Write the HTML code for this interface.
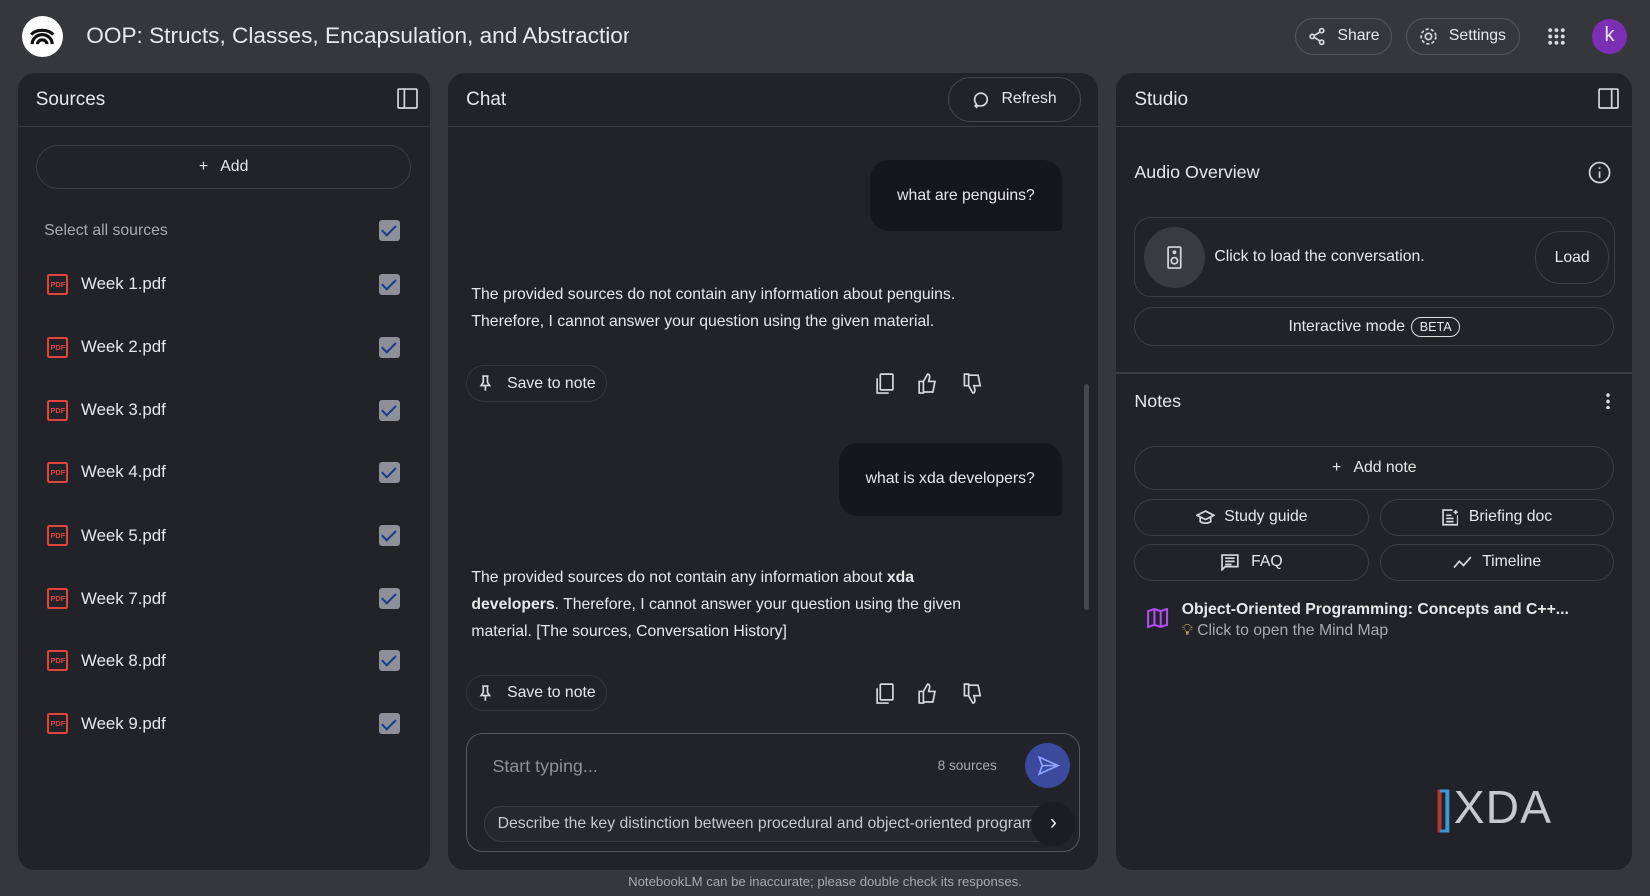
<!DOCTYPE html>
<html><head><meta charset="utf-8"><style>
*{box-sizing:border-box;margin:0;padding:0}
html,body{width:1650px;height:896px;overflow:hidden;background:#36373b}
#w{width:1568px;height:851px;zoom:1.0523;position:relative;font-family:"Liberation Sans",Arial,sans-serif;color:#e8e8ea;background:#36373b}
.a{position:absolute}
.panel{position:absolute;top:69px;height:758px;background:#212328;border-radius:16px;overflow:hidden}
.ph{height:52px;border-bottom:1px solid #3a3c42;font-size:18px;padding:16px 17px;position:relative}
.pill{position:absolute;border:1px solid #3c3e44;border-radius:24px;display:flex;align-items:center;justify-content:center;font-size:15px;font-weight:bold;color:#e8e8ea}
.cb{position:absolute;left:343px;width:20px;height:20px;background:#8d9098;border-radius:3px}
.cb:after{content:"";position:absolute;left:6px;top:2px;width:6px;height:11px;border:solid #1a3a8a;border-width:0 2px 2px 0;transform:rotate(45deg)}
.src{position:absolute;left:28px;font-size:16px;display:flex;align-items:center}
.pdf{width:20px;height:20px;border:2px solid #e0443a;border-radius:2px;color:#e0443a;font-size:7px;font-weight:bold;display:flex;align-items:center;justify-content:center;margin-right:12px}
.bub{position:absolute;background:#16171b;border-radius:18px 18px 4px 18px;font-size:15px;display:flex;align-items:center;justify-content:center}
.ans{position:absolute;left:22px;font-size:15px;line-height:25.5px;width:500px}
svg{stroke:#d8d8dc;fill:none;stroke-width:1.6}
</style></head><body><div id="w">
<div class="a" style="left:21px;top:15px;width:39px;height:39px;border-radius:50%;background:#fff"></div>
<svg class="a" style="left:27px;top:21px;stroke:#111;stroke-width:3" width="27" height="27" viewBox="0 0 27 27"><path d="M4 21a9.5 9 0 0 1 19 0"/><path d="M9 21a4.5 4 0 0 1 9 0"/><path d="M3 12a12 8 0 0 1 21 0"/></svg>
<div class="a" style="left:82px;top:22px;font-size:21.5px;color:#e8e8ea;width:516px;overflow:hidden;white-space:nowrap">OOP: Structs, Classes, Encapsulation, and Abstraction</div>
<div class="pill" style="left:1231px;top:17px;width:92px;height:35px;border-color:#55575d;font-weight:normal"><svg width="18" height="18" viewBox="0 0 18 18" style="margin-right:10px"><circle cx="13" cy="3.5" r="2"/><circle cx="4" cy="9" r="2"/><circle cx="13" cy="14.5" r="2"/><path d="M6 8l5-3M6 10l5 3"/></svg>Share</div>
<div class="pill" style="left:1336px;top:17px;width:108px;height:35px;border-color:#55575d;font-weight:normal"><svg width="18" height="18" viewBox="0 0 18 18" style="margin-right:10px"><circle cx="9" cy="9" r="3"/><circle cx="9" cy="9" r="7" stroke-dasharray="3 2"/></svg>Settings</div>
<div class="a" style="left:1470px;top:26px;width:18px;height:18px;background:radial-gradient(circle,#ddd 1.7px,transparent 2px) 0 0/6px 6px"></div>
<div class="a" style="left:1513px;top:18px;width:33px;height:33px;border-radius:50%;background:#7b2fb5;font-size:19px;text-align:center;line-height:31px">k</div>

<div class="panel" style="left:17px;width:392px">
<div class="ph">Sources<svg class="a" style="left:360px;top:15px" width="20" height="20" viewBox="0 0 20 20"><rect x="1" y="1" width="18" height="18" rx="1"/><path d="M7 1v18"/></svg></div>
<div class="pill" style="left:17px;top:69px;width:357px;height:42px;font-weight:normal">+&nbsp;&nbsp; Add</div>
<div class="a" style="left:25px;top:142px;font-size:15px;color:#a8aab0">Select all sources</div>
<div class="cb" style="top:140px"></div>
<div class="src" style="top:191px"><div class="pdf">PDF</div>Week 1.pdf</div><div class="cb" style="top:191px"></div>
<div class="src" style="top:251px"><div class="pdf">PDF</div>Week 2.pdf</div><div class="cb" style="top:251px"></div>
<div class="src" style="top:311px"><div class="pdf">PDF</div>Week 3.pdf</div><div class="cb" style="top:311px"></div>
<div class="src" style="top:370px"><div class="pdf">PDF</div>Week 4.pdf</div><div class="cb" style="top:370px"></div>
<div class="src" style="top:430px"><div class="pdf">PDF</div>Week 5.pdf</div><div class="cb" style="top:430px"></div>
<div class="src" style="top:490px"><div class="pdf">PDF</div>Week 7.pdf</div><div class="cb" style="top:490px"></div>
<div class="src" style="top:549px"><div class="pdf">PDF</div>Week 8.pdf</div><div class="cb" style="top:549px"></div>
<div class="src" style="top:609px"><div class="pdf">PDF</div>Week 9.pdf</div><div class="cb" style="top:609px"></div>
</div>

<div class="panel" style="left:426px;width:617px">
<div class="ph">Chat</div>
<div class="pill" style="left:475px;top:4px;width:126px;height:43px;border-color:#44464c;font-weight:normal"><svg width="18" height="18" viewBox="0 0 18 18" style="margin-right:10px"><path d="M4 13a6 6 0 1 1 5 2H3"/><path d="M5 17l-2-2 2-2"/></svg>Refresh</div>
<div class="bub" style="left:401px;top:83px;width:182px;height:68px">what are penguins?</div>
<div class="ans" style="top:199px">The provided sources do not contain any information about penguins. Therefore, I cannot answer your question using the given material.</div>
<div class="pill" style="left:17px;top:278px;width:134px;height:35px;border-color:#34363c;font-weight:normal"><svg width="14" height="16" viewBox="0 0 14 16" style="margin-right:14px"><path d="M4 1h6M5 1v6l-2 3h8l-2-3V1M7 10v5"/></svg>Save to note</div>
<svg class="a" style="left:406px;top:285px" width="120" height="22" viewBox="0 0 120 22"><rect x="5" y="2" width="12" height="15" rx="1"/><path d="M2 6v14h11"/><path d="M46 9h-4v11h4zM46 9l4-7c2 0 2 2 2 3l-1 4h6l-2 10H46"/><path d="M89 13h-4V2h4zM89 13l4 7c2 0 2-2 2-3l-1-4h6l-2-10H89"/></svg>
<div class="bub" style="left:371px;top:352px;width:212px;height:69px">what is xda developers?</div>
<div class="ans" style="top:468px;width:490px">The provided sources do not contain any information about <b>xda developers</b>. Therefore, I cannot answer your question using the given material. [The sources, Conversation History]</div>
<div class="pill" style="left:17px;top:572px;width:134px;height:35px;border-color:#34363c;font-weight:normal"><svg width="14" height="16" viewBox="0 0 14 16" style="margin-right:14px"><path d="M4 1h6M5 1v6l-2 3h8l-2-3V1M7 10v5"/></svg>Save to note</div>
<svg class="a" style="left:406px;top:579px" width="120" height="22" viewBox="0 0 120 22"><rect x="5" y="2" width="12" height="15" rx="1"/><path d="M2 6v14h11"/><path d="M46 9h-4v11h4zM46 9l4-7c2 0 2 2 2 3l-1 4h6l-2 10H46"/><path d="M89 13h-4V2h4zM89 13l4 7c2 0 2-2 2-3l-1-4h6l-2-10H89"/></svg>
<div class="a" style="left:604px;top:296px;width:5px;height:215px;background:#45474d;border-radius:3px"></div>
<div class="a" style="left:17px;top:628px;width:583px;height:113px;border:1px solid #55575d;border-radius:16px"></div>
<div class="a" style="left:42px;top:649px;font-size:17px;color:#8f9197">Start typing...</div>
<div class="a" style="left:465px;top:651px;font-size:13px;color:#a8aab0">8 sources</div>
<div class="a" style="left:548px;top:637px;width:43px;height:43px;border-radius:50%;background:#3b4a9c"></div>
<svg class="a" style="left:559px;top:648px;stroke:#8ea3ff" width="22" height="22" viewBox="0 0 22 22"><path d="M2 3l18 8-18 8 3-8zM5 11h15"/></svg>
<div class="a" style="left:34px;top:697px;width:560px;height:34px;border:1px solid #3c3e44;border-radius:17px;background:#26282d;font-size:15px;padding:8px 12px;white-space:nowrap;overflow:hidden;color:#c8c9cd">Describe the key distinction between procedural and object-oriented programming</div>
<div class="a" style="left:554px;top:693px;width:42px;height:42px;border-radius:50%;background:#1c1d21;font-size:20px;text-align:center;line-height:40px;color:#eee">›</div>
</div>

<div class="panel" style="left:1061px;width:490px">
<div class="ph">Studio<svg class="a" style="left:458px;top:15px" width="20" height="20" viewBox="0 0 20 20"><rect x="1" y="1" width="18" height="18" rx="1"/><path d="M13 1v18"/></svg></div>
<div class="a" style="left:17px;top:85px;font-size:17px">Audio Overview</div>
<svg class="a" style="left:448px;top:84px" width="22" height="22" viewBox="0 0 22 22"><circle cx="11" cy="11" r="9.5"/><path d="M11 10v6M11 6v1.5"/></svg>
<div class="a" style="left:17px;top:137px;width:457px;height:76px;border:1px solid #3c3e44;border-radius:16px"></div>
<div class="a" style="left:26px;top:147px;width:58px;height:58px;border-radius:50%;background:#3a3b40"></div>
<svg class="a" style="left:47px;top:165px" width="16" height="22" viewBox="0 0 16 22"><rect x="2" y="1" width="12" height="20" rx="1"/><circle cx="8" cy="14" r="3"/><circle cx="8" cy="6" r="1"/></svg>
<div class="a" style="left:93px;top:167px;font-size:15px">Click to load the conversation.</div>
<div class="pill" style="left:398px;top:151px;width:70px;height:50px;font-weight:normal">Load</div>
<div class="pill" style="left:17px;top:223px;width:456px;height:37px;font-weight:normal">Interactive mode <span style="border:1px solid #ddd;border-radius:11px;font-size:12px;padding:2px 7px;margin-left:6px">BETA</span></div>
<div class="a" style="left:0;top:285px;width:490px;height:1px;background:#3a3c42"></div>
<div class="a" style="left:17px;top:303px;font-size:17px">Notes</div>
<div class="a" style="left:465px;top:304px;width:4px;height:16px;background:radial-gradient(circle,#ddd 1.6px,transparent 2px) 0 0/4px 6px"></div>
<div class="pill" style="left:17px;top:355px;width:456px;height:42px;font-weight:normal">+&nbsp;&nbsp; Add note</div>
<div class="pill" style="left:17px;top:405px;width:223px;height:35px;font-weight:normal"><svg width="18" height="16" viewBox="0 0 18 16" style="margin-right:9px"><path d="M1 6l8-4 8 4-8 4zM4 8v4c3 2 7 2 10 0V8"/></svg>Study guide</div>
<div class="pill" style="left:250px;top:405px;width:223px;height:35px;font-weight:normal"><svg width="16" height="16" viewBox="0 0 16 16" style="margin-right:10px"><path d="M10 1H1v14h14V6M4 6h5M4 9h7M4 12h7M13 1v4M11 3h4"/></svg>Briefing doc</div>
<div class="pill" style="left:17px;top:448px;width:223px;height:35px;font-weight:normal"><svg width="17" height="16" viewBox="0 0 17 16" style="margin-right:12px"><path d="M1 1h15v11H4l-3 3zM4 4h9M4 7h9M4 10h6"/></svg>FAQ</div>
<div class="pill" style="left:250px;top:448px;width:223px;height:35px;font-weight:normal"><svg width="18" height="12" viewBox="0 0 18 12" style="margin-right:10px"><path d="M1 11l5-6 4 4 7-8"/></svg>Timeline</div>
<svg class="a" style="left:28px;top:509px;stroke:#b04cf0;stroke-width:2" width="22" height="20" viewBox="0 0 22 20"><path d="M2 3l6-2 6 2 6-2v15l-6 2-6-2-6 2zM8 1v15M14 3v15"/></svg>
<div class="a" style="left:62px;top:502px;font-size:15px;font-weight:bold">Object-Oriented Programming: Concepts and C++...</div>
<div class="a" style="left:62px;top:522px;font-size:15px;color:#a8aab0"><span style="color:#f5d36b">💡&#xFE0E;</span> Click to open the Mind Map</div>
<div class="a" style="left:302px;top:672px;font-size:44px;color:#c8c9cc;letter-spacing:1px"><span style="color:#b43a33">[</span><span style="color:#3a9ad9;margin-left:-8px">]</span>XDA</div>
</div>
<div class="a" style="left:0;top:831px;width:1568px;text-align:center;font-size:12.5px;color:#a8aab0">NotebookLM can be inaccurate; please double check its responses.</div>
</div></body></html>
